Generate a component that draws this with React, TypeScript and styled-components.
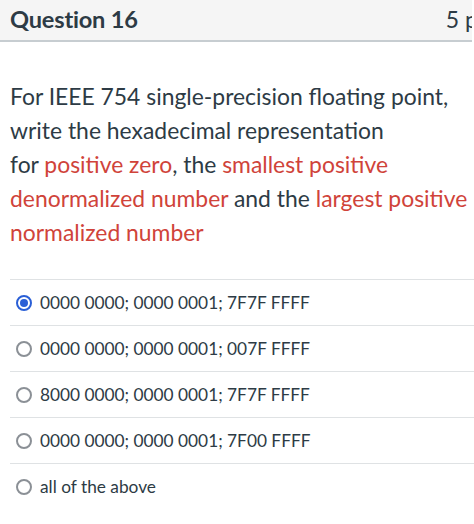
import styled, { createGlobalStyle } from 'styled-components';

const GlobalStyle = createGlobalStyle`
  html, body {
    margin: 0;
    padding: 0;
    background: #ffffff;
  }
  body {
    font-family: Lato, "Noto Sans", sans-serif;
    color: #2d3b45;
  }
`;

const Page = styled.div`
  width: 474px;
  overflow: hidden;
`;

const Header = styled.header`
  width: 472px;
  height: 42px;
  box-sizing: border-box;
  padding: 0 0 0 10px;
  display: flex;
  align-items: center;
  justify-content: space-between;
  background: #f5f5f5;
  border-bottom: 2px solid #c7cdd1;
  white-space: nowrap;
  overflow: hidden;
`;

const Title = styled.h2`
  margin: 0 0 2px;
  font-size: 23.6px;
  font-weight: 700;
  letter-spacing: -0.2px;
`;

const Points = styled.span`
  font-size: 23px;
  font-weight: 400;
  margin: 0 -24px 2px 0;
`;

const Body = styled.div`
  padding: 37px 0 0 10px;
`;

const QuestionText = styled.p`
  margin: 0;
  font-size: 22.9px;
  line-height: 34px;
`;

const Hl = styled.span`
  color: #d0433a;
`;

const Answers = styled.ul`
  list-style: none;
  margin: 30px 0 0;
  padding: 0;
`;

const Answer = styled.li`
  height: 46px;
  box-sizing: border-box;
  border-top: 1px solid #dfe2e4;
  display: flex;
  align-items: center;
  gap: 8px;
  padding-left: 6px;
  font-size: 17.3px;
`;

const Radio = styled.span<{ $checked?: boolean }>`
  width: 16px;
  height: 16px;
  box-sizing: border-box;
  border-radius: 50%;
  border: 2px solid ${(p) => (p.$checked ? '#2a5fd6' : '#8b9096')};
  background: #fff;
  display: flex;
  align-items: center;
  justify-content: center;
  flex-shrink: 0;
  &::after {
    content: '';
    display: ${(p) => (p.$checked ? 'block' : 'none')};
    width: 8px;
    height: 8px;
    border-radius: 50%;
    background: #2a5fd6;
  }
`;

const options = [
  { label: '0000 0000; 0000 0001; 7F7F FFFF', checked: true },
  { label: '0000 0000; 0000 0001; 007F FFFF' },
  { label: '8000 0000; 0000 0001; 7F7F FFFF' },
  { label: '0000 0000; 0000 0001; 7F00 FFFF' },
  { label: 'all of the above' },
];

export default function App() {
  return (
    <Page>
      <GlobalStyle />
      <Header>
        <Title>Question 16</Title>
        <Points>5 pts</Points>
      </Header>
      <Body>
        <QuestionText>
          For IEEE 754 single-precision floating point,
          <br />
          write the hexadecimal representation
          <br />
          for <Hl>positive zero</Hl>, the <Hl>smallest positive</Hl>
          <br />
          <Hl>denormalized number</Hl> and the <Hl>largest positive</Hl>
          <br />
          <Hl>normalized number</Hl>
        </QuestionText>
        <Answers>
          {options.map((o) => (
            <Answer key={o.label}>
              <Radio $checked={o.checked} />
              {o.label}
            </Answer>
          ))}
        </Answers>
      </Body>
    </Page>
  );
}
